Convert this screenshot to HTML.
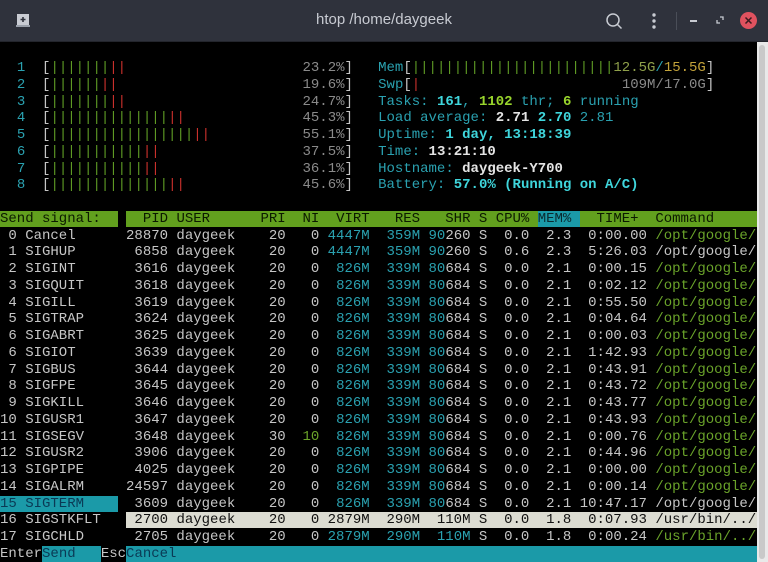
<!DOCTYPE html>
<html><head><meta charset="utf-8">
<style>
html,body{margin:0;padding:0;}
body{width:768px;height:562px;background:#000;position:relative;overflow:hidden;}
#tb{position:absolute;left:0;top:0;width:768px;height:41px;background:#2f323c;border-bottom:1px solid #23252c;}
#title{position:absolute;left:0;width:768px;top:11px;text-align:center;font:15px "Liberation Sans",sans-serif;color:#c8cbd2;}
#term{position:absolute;left:0;top:42px;width:757px;height:520px;background:#000;overflow:hidden;}
#sb{position:absolute;left:757px;top:42px;width:11px;height:520px;background:#e9e9e9;}
#sbt{position:absolute;left:759px;top:45px;width:6px;height:514px;background:#c9c9c9;border-radius:3px;}
pre{position:absolute;left:0;top:18px;margin:0;font:14px/16.75px "Liberation Mono",monospace;color:#c6c6c6;white-space:pre;}
.t{color:#2aa1b0}
.c{color:#3fd6dc;font-weight:bold}
.g{color:#98d42c;font-weight:bold}
.w{color:#e4e4e4;font-weight:bold}
.gr{color:#8a8a8a}
.G{color:#6aa32a}
.r{color:#c9302c}
.b{color:#5e9a24}
.y{color:#c2a23a}
.o{color:#8fa04a}
.hd{background:#62a01e;color:#0c1a00}
.mh{background:#1b9aa8;color:#0a2a30}
.sel{background:#1b9aa8;color:#0a3a55}
.hl{background:#dcdcd2;color:#111}
</style></head><body>
<div id="tb">
<svg style="position:absolute;left:14px;top:11px" width="18" height="18" viewBox="0 0 18 18"><path d="M3 3h12v11H3z" fill="#c9ccd3"/><rect x="2" y="14" width="14" height="2" fill="#9aa0aa"/><path d="M9 6v5M6.5 8.5h5" stroke="#2f323c" stroke-width="1.6"/></svg>
<div id="title">htop /home/daygeek</div>
<svg style="position:absolute;left:604px;top:11px" width="20" height="20" viewBox="0 0 20 20"><circle cx="9" cy="9" r="6" fill="none" stroke="#c8cbd2" stroke-width="1.5"/><path d="M13.5 13.5l4 4" stroke="#c8cbd2" stroke-width="1.5"/></svg>
<svg style="position:absolute;left:650px;top:12px" width="8" height="18" viewBox="0 0 8 18"><circle cx="4" cy="3" r="1.7" fill="#c8cbd2"/><circle cx="4" cy="9" r="1.7" fill="#c8cbd2"/><circle cx="4" cy="15" r="1.7" fill="#c8cbd2"/></svg>
<div style="position:absolute;left:676px;top:12px;width:1px;height:18px;background:#4a4e58"></div>
<div style="position:absolute;left:690px;top:20px;width:7px;height:2px;background:#c8cbd2"></div>
<svg style="position:absolute;left:715px;top:15px" width="10" height="10" viewBox="0 0 10 10"><path d="M5 2l3 0 0 3M5 8l-3 0 0-3" stroke="#c8cbd2" stroke-width="1.3" fill="none"/></svg>
<svg style="position:absolute;left:739px;top:11px" width="19" height="19" viewBox="0 0 19 19"><circle cx="9.5" cy="9.5" r="8.5" fill="#e0525f"/><path d="M6.5 6.5l6 6M12.5 6.5l-6 6" stroke="#3a1a1e" stroke-width="1.5"/></svg>
</div>
<div id="term"><pre>
  <span class="t">1</span>  [<span class="b">|||||||</span><span class="r">||</span>                     <span class="gr">23.2%</span>]   <span class="t">Mem</span>[<span class="b">||||||||||||||||||||||||</span><span class="o">12.5G</span><span class="t">/</span><span class="y">15.5G</span>]
  <span class="t">2</span>  [<span class="b">||||||</span><span class="r">||</span>                      <span class="gr">19.6%</span>]   <span class="t">Swp</span>[<span class="r">|</span>                        <span class="gr">109M/17.0G</span>]
  <span class="t">3</span>  [<span class="b">|||||||</span><span class="r">||</span>                     <span class="gr">24.7%</span>]   <span class="t">Tasks: </span><span class="c">161</span><span class="t">, </span><span class="g">1102</span><span class="t"> thr; </span><span class="g">6</span><span class="t"> running</span>
  <span class="t">4</span>  [<span class="b">||||||||||||||</span><span class="r">||</span>              <span class="gr">45.3%</span>]   <span class="t">Load average: </span><span class="w">2.71 </span><span class="c">2.70 </span><span class="t">2.81</span>
  <span class="t">5</span>  [<span class="b">|||||||||||||||||</span><span class="r">||</span>           <span class="gr">55.1%</span>]   <span class="t">Uptime: </span><span class="c">1 day, 13:18:39</span>
  <span class="t">6</span>  [<span class="b">|||||||||||</span><span class="r">||</span>                 <span class="gr">37.5%</span>]   <span class="t">Time: </span><span class="w">13:21:10</span>
  <span class="t">7</span>  [<span class="b">|||||||||||</span><span class="r">||</span>                 <span class="gr">36.1%</span>]   <span class="t">Hostname: </span><span class="w">daygeek-Y700</span>
  <span class="t">8</span>  [<span class="b">||||||||||||||</span><span class="r">||</span>              <span class="gr">45.6%</span>]   <span class="t">Battery: </span><span class="c">57.0% (Running on A/C)</span>

<span class="hd">Send signal:  </span> <span class="hd">  PID USER      PRI  NI  VIRT   RES   SHR S CPU% </span><span class="mh">MEM% </span><span class="hd">  TIME+  Command      </span>
 0 Cancel      28870 daygeek    20   0 <span class="t">4447M</span>  <span class="t">359M</span> <span class="t">90</span>260 S  0.0  2.3  0:00.00 <span class="G">/opt/google/</span>
 1 SIGHUP       6858 daygeek    20   0 <span class="t">4447M</span>  <span class="t">359M</span> <span class="t">90</span>260 S  0.6  2.3  5:26.03 /opt/google/
 2 SIGINT       3616 daygeek    20   0  <span class="t">826M</span>  <span class="t">339M</span> <span class="t">80</span>684 S  0.0  2.1  0:00.15 <span class="G">/opt/google/</span>
 3 SIGQUIT      3618 daygeek    20   0  <span class="t">826M</span>  <span class="t">339M</span> <span class="t">80</span>684 S  0.0  2.1  0:02.12 <span class="G">/opt/google/</span>
 4 SIGILL       3619 daygeek    20   0  <span class="t">826M</span>  <span class="t">339M</span> <span class="t">80</span>684 S  0.0  2.1  0:55.50 <span class="G">/opt/google/</span>
 5 SIGTRAP      3624 daygeek    20   0  <span class="t">826M</span>  <span class="t">339M</span> <span class="t">80</span>684 S  0.0  2.1  0:04.64 <span class="G">/opt/google/</span>
 6 SIGABRT      3625 daygeek    20   0  <span class="t">826M</span>  <span class="t">339M</span> <span class="t">80</span>684 S  0.0  2.1  0:00.03 <span class="G">/opt/google/</span>
 6 SIGIOT       3639 daygeek    20   0  <span class="t">826M</span>  <span class="t">339M</span> <span class="t">80</span>684 S  0.0  2.1  1:42.93 <span class="G">/opt/google/</span>
 7 SIGBUS       3644 daygeek    20   0  <span class="t">826M</span>  <span class="t">339M</span> <span class="t">80</span>684 S  0.0  2.1  0:43.91 <span class="G">/opt/google/</span>
 8 SIGFPE       3645 daygeek    20   0  <span class="t">826M</span>  <span class="t">339M</span> <span class="t">80</span>684 S  0.0  2.1  0:43.72 <span class="G">/opt/google/</span>
 9 SIGKILL      3646 daygeek    20   0  <span class="t">826M</span>  <span class="t">339M</span> <span class="t">80</span>684 S  0.0  2.1  0:43.77 <span class="G">/opt/google/</span>
10 SIGUSR1      3647 daygeek    20   0  <span class="t">826M</span>  <span class="t">339M</span> <span class="t">80</span>684 S  0.0  2.1  0:43.93 <span class="G">/opt/google/</span>
11 SIGSEGV      3648 daygeek    30  <span class="G">10</span>  <span class="t">826M</span>  <span class="t">339M</span> <span class="t">80</span>684 S  0.0  2.1  0:00.76 <span class="G">/opt/google/</span>
12 SIGUSR2      3906 daygeek    20   0  <span class="t">826M</span>  <span class="t">339M</span> <span class="t">80</span>684 S  0.0  2.1  0:44.96 <span class="G">/opt/google/</span>
13 SIGPIPE      4025 daygeek    20   0  <span class="t">826M</span>  <span class="t">339M</span> <span class="t">80</span>684 S  0.0  2.1  0:00.00 <span class="G">/opt/google/</span>
14 SIGALRM     24597 daygeek    20   0  <span class="t">826M</span>  <span class="t">339M</span> <span class="t">80</span>684 S  0.0  2.1  0:00.14 <span class="G">/opt/google/</span>
<span class="sel">15 SIGTERM    </span>  3609 daygeek    20   0  <span class="t">826M</span>  <span class="t">339M</span> <span class="t">80</span>684 S  0.0  2.1 10:47.17 /opt/google/
16 SIGSTKFLT   <span class="hl"> 2700 daygeek    20   0 2879M  290M  110M S  0.0  1.8  0:07.93 /usr/bin/../ </span>
17 SIGCHLD      2705 daygeek    20   0 <span class="t">2879M</span>  <span class="t">290M</span>  <span class="t">110M</span> S  0.0  1.8  0:00.24 <span class="G">/usr/bin/../</span>
Enter<span class="sel">Send   </span>Esc<span class="sel">Cancel                                                                           </span>
</pre></div>
<div id="sb"></div><div id="sbt"></div>
</body></html>
